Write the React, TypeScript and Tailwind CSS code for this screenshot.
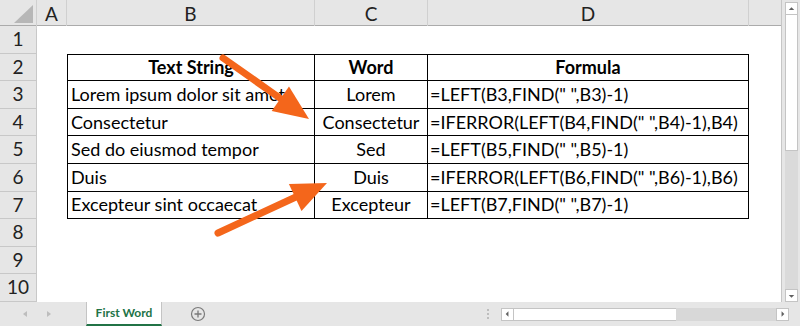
import React from "react";

const rows = [
  { b: "Text String", c: "Word", d: "Formula", head: true },
  { b: "Lorem ipsum dolor sit amet", c: "Lorem", d: '=LEFT(B3,FIND(" ",B3)-1)' },
  { b: "Consectetur", c: "Consectetur", d: '=IFERROR(LEFT(B4,FIND(" ",B4)-1),B4)' },
  { b: "Sed do eiusmod tempor", c: "Sed", d: '=LEFT(B5,FIND(" ",B5)-1)' },
  { b: "Duis", c: "Duis", d: '=IFERROR(LEFT(B6,FIND(" ",B6)-1),B6)' },
  { b: "Excepteur sint occaecat", c: "Excepteur", d: '=LEFT(B7,FIND(" ",B7)-1)' },
];

const cols = "grid-cols-[37px_30px_248px_113px_321px_1fr]";

const ScrollBtn = ({ dir }: { dir: "up" | "down" | "left" | "right" }) => {
  const pts = {
    up: "3,7 6,4 9,7",
    down: "3,5 6,8 9,5",
    left: "7,3 4,6 7,9",
    right: "5,3 8,6 5,9",
  }[dir];
  return (
    <div className="w-[13px] h-[13px] bg-white border border-[#c4c4c4] flex items-center justify-center">
      <svg width="12" height="12" viewBox="0 0 12 12">
        <polygon points={pts} fill="#606060" />
      </svg>
    </div>
  );
};

const App = () => {
  return (
    <div
      className="relative w-[800px] h-[326px] bg-[#e6e6e6] flex flex-col overflow-hidden text-[#222]"
      style={{ fontFamily: "Lato, 'Open Sans', sans-serif" }}
    >
      <div className="flex h-[302px]">
        <div className="flex-1 flex flex-col border-r border-[#c6c6c6]">
          {/* column headers */}
          <div className={`grid ${cols} h-[26px] border-b border-[#ababab] text-[19px]`}>
            <div className="border-r border-[#d0d0d0] relative">
              <svg className="absolute left-[14px] top-[5px]" width="20" height="19" viewBox="0 0 20 19">
                <polygon points="19,0 19,18 0,18" fill="#b7b7b7" />
              </svg>
            </div>
            {["A", "B", "C", "D", ""].map((l, i) => (
              <div key={i} className={`flex items-center justify-center ${i < 4 ? "border-r border-[#d0d0d0]" : ""}`}>
                {l}
              </div>
            ))}
          </div>
          {/* body */}
          <div className={`grid ${cols} grid-rows-[repeat(10,27.6px)] bg-white`}>
            {Array.from({ length: 10 }).map((_, r) => {
              const t = r >= 1 && r <= 6 ? rows[r - 1] : null;
              return (
                <React.Fragment key={r}>
                  <div className="bg-[#e6e6e6] border-r border-b border-[#c8c8c8] flex items-center justify-center text-[19px]">
                    {r + 1}
                  </div>
                  <div />
                  {t ? (
                    <>
                      <div
                        className={`border-l border-r border-b border-black flex items-center text-[18px] text-black whitespace-nowrap overflow-hidden ${r === 1 ? "border-t" : ""} ${t.head ? "justify-center font-bold" : "pl-[3px]"}`}
                      >
                        {t.b}
                      </div>
                      <div
                        className={`border-r border-b border-black flex items-center justify-center text-[18px] text-black whitespace-nowrap ${r === 1 ? "border-t" : ""} ${t.head ? "font-bold" : ""}`}
                      >
                        {t.c}
                      </div>
                      <div
                        className={`border-r border-b border-black flex items-center text-[18px] text-black whitespace-nowrap ${r === 1 ? "border-t" : ""} ${t.head ? "justify-center font-bold" : "pl-[2px]"}`}
                      >
                        {t.d}
                      </div>
                    </>
                  ) : (
                    <>
                      <div />
                      <div />
                      <div />
                    </>
                  )}
                  <div />
                </React.Fragment>
              );
            })}
          </div>
        </div>
        {/* vertical scrollbar */}
        <div className="w-[18px] flex flex-col items-center pt-[2px]">
          <ScrollBtn dir="up" />
          <div className="w-[13px] h-[136px] bg-white border-x border-b border-[#c4c4c4]" />
          <div className="flex-1 w-[13px] bg-[#dadada]" />
          <ScrollBtn dir="down" />
        </div>
      </div>

      {/* sheet tabs bar */}
      <div className="flex-1 flex items-stretch">
        <div className="w-[86px] flex items-center gap-[14px] pl-[20px]">
          <svg width="10" height="10" viewBox="0 0 10 10">
            <polygon points="7,2 3,5 7,8" fill="#bdbdbd" />
          </svg>
          <svg width="10" height="10" viewBox="0 0 10 10">
            <polygon points="3,2 7,5 3,8" fill="#bdbdbd" />
          </svg>
        </div>
        <div className="w-[76px] bg-white border-x border-[#c4c4c4] border-b-2 border-b-[#217346] flex items-center justify-center text-[12px] font-bold text-[#217346]">
          First Word
        </div>
        <div className="w-[72px] flex items-center justify-center">
          <svg width="16" height="16" viewBox="0 0 16 16">
            <circle cx="8" cy="8" r="6.5" fill="none" stroke="#7a7a7a" strokeWidth="1.2" />
            <path d="M8 4.5v7M4.5 8h7" stroke="#7a7a7a" strokeWidth="1.3" />
          </svg>
        </div>
        <div className="flex-1 flex items-center justify-end pr-[11px]">
          <div className="flex flex-col gap-[2px] mr-[12px]">
            <span className="w-[2px] h-[2px] bg-[#bdbdbd]" />
            <span className="w-[2px] h-[2px] bg-[#bdbdbd]" />
            <span className="w-[2px] h-[2px] bg-[#bdbdbd]" />
          </div>
          <div className="flex items-center">
            <ScrollBtn dir="left" />
            <div className="w-[162px] h-[13px] bg-white border-y border-[#c4c4c4]" />
            <div className="w-[100px] h-[13px] bg-[#d8d8d8]" />
            <ScrollBtn dir="right" />
          </div>
        </div>
      </div>

      {/* callout arrows */}
      <svg className="absolute left-0 top-0 pointer-events-none" width="800" height="326" viewBox="0 0 800 326">
        <line x1="223" y1="58" x2="284" y2="101" stroke="#f4661b" strokeWidth="7" strokeLinecap="round" />
        <polygon points="309,119 289,86.5 271.7,111" fill="#f4661b" />
        <line x1="218" y1="233" x2="298" y2="196" stroke="#f4661b" strokeWidth="7" strokeLinecap="round" />
        <polygon points="327,183 288.9,184 301.5,211" fill="#f4661b" />
      </svg>
    </div>
  );
};

export default App;
